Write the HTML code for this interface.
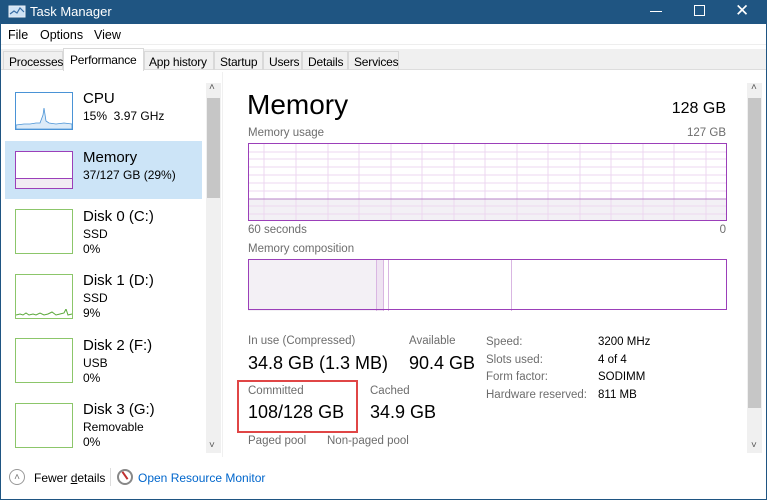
<!DOCTYPE html>
<html><head><style>
*{margin:0;padding:0;box-sizing:border-box}
body{width:767px;height:500px;overflow:hidden;background:#fff;font-family:"Liberation Sans",sans-serif;position:relative;color:#000}
.a{position:absolute;white-space:nowrap}
.g{color:#6d6d6d;font-size:11.5px}
.v{font-size:18px}
.box{position:absolute;border:1px solid}
.t{font-size:12px;letter-spacing:-0.2px}
</style></head><body>
<div class="a" style="left:0;top:0;width:767px;height:500px;border:1px solid #1f5582;border-top:none"></div>
<div class="a" style="left:0;top:0;width:767px;height:24px;background:#1f5582"></div>
<svg class="a" style="left:8px;top:5px" width="18" height="14"><rect x="1" y="1" width="16" height="11" fill="#cfe3f5" stroke="#e8eef5"/><polyline points="2,9 6,6 9,8 12,3 16,7" fill="none" stroke="#3a6ea5" stroke-width="1.2"/></svg>
<div class="a" style="left:30px;top:4px;color:#fff;font-size:13px">Task Manager</div>
<div class="a" style="left:650px;top:11px;width:12px;height:1px;background:#fff"></div>
<div class="a" style="left:694px;top:5px;width:11px;height:11px;border:1px solid #fff"></div>
<div class="a" style="left:735px;top:1px;color:#fff;font-size:17px">✕</div>
<div class="a" style="left:8px;top:28px;font-size:12.5px">File</div>
<div class="a" style="left:40px;top:28px;font-size:12.5px">Options</div>
<div class="a" style="left:94px;top:28px;font-size:12.5px">View</div>
<div class="a" style="left:1px;top:44px;width:765px;height:1px;background:#eee"></div>
<div class="a" style="left:1px;top:49px;width:765px;height:21px;background:#f0f0f0;border-bottom:1px solid #ddd"></div>
<div class="a t" style="left:3px;top:51px;height:19px;width:60px;border:1px solid #d9d9d9;border-bottom:none;padding:3px 5px">Processes</div>
<div class="a t" style="left:63px;top:48px;height:23px;width:81px;background:#fff;border:1px solid #d9d9d9;border-bottom:none;padding:4px 6px">Performance</div>
<div class="a t" style="left:144px;top:51px;height:19px;width:70px;border:1px solid #d9d9d9;border-bottom:none;padding:3px 4px">App history</div>
<div class="a t" style="left:214px;top:51px;height:19px;width:49px;border:1px solid #d9d9d9;border-bottom:none;padding:3px 5px">Startup</div>
<div class="a t" style="left:263px;top:51px;height:19px;width:39px;border:1px solid #d9d9d9;border-bottom:none;padding:3px 5px">Users</div>
<div class="a t" style="left:302px;top:51px;height:19px;width:46px;border:1px solid #d9d9d9;border-bottom:none;padding:3px 5px">Details</div>
<div class="a t" style="left:348px;top:51px;height:19px;width:51px;border:1px solid #d9d9d9;border-bottom:none;padding:3px 5px">Services</div>
<!-- left list -->
<div class="a" style="left:5px;top:141px;width:197px;height:58px;background:#cce4f7"></div>
<div class="a" style="left:206px;top:83px;width:15px;height:370px;background:#f0f0f0"></div>
<div class="a" style="left:207px;top:98px;width:13px;height:100px;background:#c6c6c6"></div>
<div class="a" style="left:209px;top:82px;font-size:10px;color:#555">˄</div>
<div class="a" style="left:209px;top:440px;font-size:10px;color:#555">˅</div>
<div class="a" style="left:222px;top:72px;width:1px;height:385px;background:#f0f0f0"></div>
<div class="box" style="left:15px;top:92px;width:58px;height:38px;border-color:#4a93d6;background:#fff"></div>
<svg class="a" style="left:16px;top:93px" width="56" height="36"><polygon points="0,32 8,31 14,31 20,30 24,30 27,22 28,15 30,28 33,30 40,31 48,30 56,31 56,36 0,36" fill="#dcebf8" stroke="#4a93d6" stroke-width="0.8"/></svg>
<div class="a" style="left:83px;top:90px;font-size:15px">CPU</div>
<div class="a" style="left:83px;top:109px;font-size:12px">15%&nbsp; 3.97 GHz</div>
<div class="box" style="left:15px;top:151px;width:58px;height:38px;border-color:#9b3fb9;background:#fff"></div>
<div class="a" style="left:16px;top:178px;width:56px;height:10px;background:#f1ecf3;border-top:1px solid #9b3fb9"></div>
<div class="a" style="left:83px;top:149px;font-size:15px">Memory</div>
<div class="a" style="left:83px;top:168px;font-size:12px">37/127 GB (29%)</div>
<div class="box" style="left:15px;top:209px;width:58px;height:45px;border-color:#8cc66a"></div>
<div class="a" style="left:83px;top:208px;font-size:15px">Disk 0 (C:)</div>
<div class="a" style="left:83px;top:227px;font-size:12px;line-height:15px">SSD<br>0%</div>
<div class="box" style="left:15px;top:274px;width:58px;height:45px;border-color:#8cc66a"></div>
<svg class="a" style="left:16px;top:309px" width="56" height="9"><polyline points="0,6 4,5 7,6 10,4 13,6 17,5 20,6 24,4 28,6 32,5 36,3 40,6 44,5 48,4 50,0 52,6 56,5" fill="none" stroke="#5aa83a" stroke-width="1"/></svg>
<div class="a" style="left:83px;top:272px;font-size:15px">Disk 1 (D:)</div>
<div class="a" style="left:83px;top:291px;font-size:12px;line-height:15px">SSD<br>9%</div>
<div class="box" style="left:15px;top:338px;width:58px;height:45px;border-color:#8cc66a"></div>
<div class="a" style="left:83px;top:337px;font-size:15px">Disk 2 (F:)</div>
<div class="a" style="left:83px;top:356px;font-size:12px;line-height:15px">USB<br>0%</div>
<div class="box" style="left:15px;top:403px;width:58px;height:45px;border-color:#8cc66a"></div>
<div class="a" style="left:83px;top:401px;font-size:15px">Disk 3 (G:)</div>
<div class="a" style="left:83px;top:420px;font-size:12px;line-height:15px">Removable<br>0%</div>
<!-- right -->
<div class="a" style="left:247px;top:89px;font-size:28px">Memory</div>
<div class="a" style="left:726px;top:100px;font-size:16px;transform:translateX(-100%)">128 GB</div>
<div class="a g" style="left:248px;top:127px">Memory usage</div>
<div class="a g" style="left:726px;top:127px;transform:translateX(-100%)">127 GB</div>
<svg class="a" style="left:248px;top:143px" width="479" height="78">
<rect x="0" y="56" width="479" height="22" fill="#f3f0f5"/>
<g stroke="#ecd7f0" stroke-width="1">
<line x1="0" y1="9" x2="479" y2="9"/><line x1="0" y1="16" x2="479" y2="16"/><line x1="0" y1="24" x2="479" y2="24"/><line x1="0" y1="32" x2="479" y2="32"/><line x1="0" y1="40" x2="479" y2="40"/><line x1="0" y1="48" x2="479" y2="48"/><line x1="0" y1="63" x2="479" y2="63"/><line x1="0" y1="71" x2="479" y2="71"/>
<line x1="16" y1="0" x2="16" y2="78"/><line x1="48" y1="0" x2="48" y2="78"/><line x1="80" y1="0" x2="80" y2="78"/><line x1="111" y1="0" x2="111" y2="78"/><line x1="143" y1="0" x2="143" y2="78"/><line x1="174" y1="0" x2="174" y2="78"/><line x1="206" y1="0" x2="206" y2="78"/><line x1="237" y1="0" x2="237" y2="78"/><line x1="269" y1="0" x2="269" y2="78"/><line x1="300" y1="0" x2="300" y2="78"/><line x1="332" y1="0" x2="332" y2="78"/><line x1="363" y1="0" x2="363" y2="78"/><line x1="395" y1="0" x2="395" y2="78"/><line x1="426" y1="0" x2="426" y2="78"/><line x1="458" y1="0" x2="458" y2="78"/></g>
<line x1="0" y1="56" x2="479" y2="56" stroke="#b783c8" stroke-width="1"/>
<rect x="0.5" y="0.5" width="478" height="77" fill="none" stroke="#9b3fb9"/>
</svg>
<div class="a g" style="left:248px;top:224px">60 seconds</div>
<div class="a g" style="left:726px;top:224px;transform:translateX(-100%)">0</div>
<div class="a g" style="left:248px;top:243px">Memory composition</div>
<svg class="a" style="left:248px;top:259px" width="479" height="52">
<rect x="0" y="0" width="128" height="52" fill="#f3f0f5"/>
<rect x="128" y="0" width="8" height="52" fill="#efe3f2"/>
<g stroke="#d9b6e2"><line x1="128.5" y1="0" x2="128.5" y2="52"/><line x1="135.5" y1="0" x2="135.5" y2="52"/><line x1="140.5" y1="0" x2="140.5" y2="52"/><line x1="263.5" y1="0" x2="263.5" y2="52"/></g>
<rect x="0.5" y="0.5" width="478" height="50" fill="none" stroke="#9b3fb9"/>
</svg>
<div class="a g" style="left:248px;top:335px">In use (Compressed)</div>
<div class="a g" style="left:409px;top:335px">Available</div>
<div class="a v" style="left:248px;top:353px">34.8 GB (1.3 MB)</div>
<div class="a v" style="left:409px;top:353px">90.4 GB</div>
<div class="a g" style="left:248px;top:385px">Committed</div>
<div class="a g" style="left:370px;top:385px">Cached</div>
<div class="a v" style="left:248px;top:402px">108/128 GB</div>
<div class="a v" style="left:370px;top:402px">34.9 GB</div>
<div class="a" style="left:237px;top:380px;width:121px;height:53px;border:2px solid #e04646"></div>
<div class="a g" style="left:248px;top:435px">Paged pool</div>
<div class="a g" style="left:327px;top:435px">Non-paged pool</div>
<div class="a g" style="left:486px;top:334px;line-height:17.5px">Speed:<br>Slots used:<br>Form factor:<br>Hardware reserved:</div>
<div class="a" style="left:598px;top:334px;font-size:11.5px;line-height:17.5px">3200 MHz<br>4 of 4<br>SODIMM<br>811 MB</div>
<div class="a" style="left:747px;top:83px;width:15px;height:370px;background:#f0f0f0"></div>
<div class="a" style="left:748px;top:98px;width:13px;height:310px;background:#c6c6c6"></div>
<div class="a" style="left:751px;top:82px;font-size:10px;color:#555">˄</div>
<div class="a" style="left:751px;top:440px;font-size:10px;color:#555">˅</div>
<!-- bottom -->
<div class="a" style="left:9px;top:469px;width:16px;height:16px;border:1px solid #999;border-radius:50%;font-size:10px;color:#777;text-align:center;line-height:15px">˄</div>
<div class="a" style="left:34px;top:471px;font-size:12px">Fewer <u>d</u>etails</div>
<div class="a" style="left:110px;top:468px;width:1px;height:18px;background:#ddd"></div>
<div class="a" style="left:117px;top:469px;width:16px;height:16px;border:2px solid #888;border-radius:50%"></div>
<div class="a" style="left:124px;top:471px;width:2px;height:9px;background:#c03030;transform:rotate(-35deg)"></div>
<div class="a" style="left:138px;top:471px;font-size:12px;color:#0066cc">Open Resource Monitor</div>
</body></html>
